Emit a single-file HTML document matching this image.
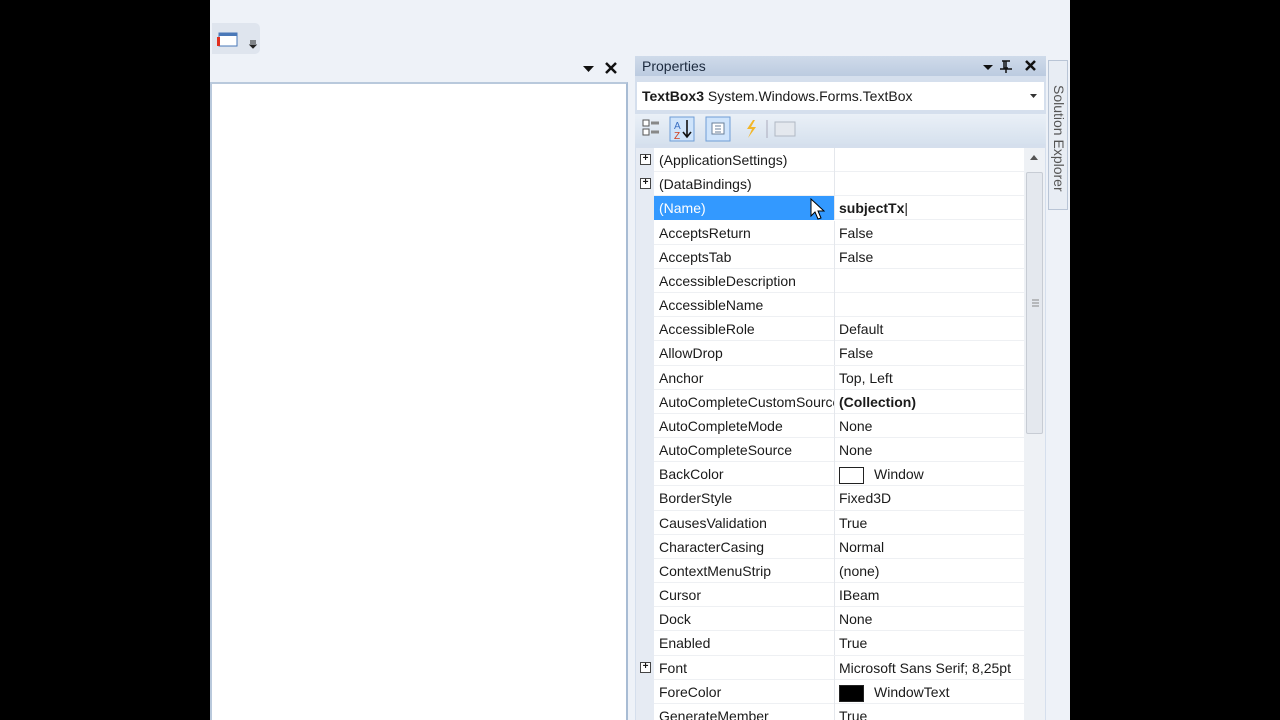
<!DOCTYPE html>
<html><head><meta charset="utf-8"><style>
*{margin:0;padding:0;box-sizing:border-box}
html{width:1280px;height:720px;overflow:hidden}
body{width:1280px;height:720px;background:#000;position:relative;overflow:hidden;font-family:"Liberation Sans",sans-serif;font-size:14px;color:#1a1a1a}
#main{position:absolute;left:210px;top:0;width:860px;height:720px;background:#eef2f8}
#doc{position:absolute;left:210px;top:82px;width:418px;height:660px;background:#fff;border:2px solid #b9c9dc;border-right-color:#a8bcd4}
#tbicon{position:absolute;left:212px;top:23px;width:48px;height:31px;background:#dfe5ee;border-radius:0 5px 5px 0}
#props{position:absolute;left:635px;top:56px;width:411px;height:664px;background:#d5dfed;overflow:hidden}
#title{position:absolute;left:0;top:0;width:411px;height:20px;background:linear-gradient(#cfdbea,#bccbe0);padding-left:7px;line-height:20px;color:#1c2a3e}
#combo{position:absolute;left:2px;top:26px;width:407px;height:28px;background:#fff;line-height:28px;padding-left:5px;font-size:14px}
#toolbar{position:absolute;left:0;top:58px;width:411px;height:30px;background:linear-gradient(#eaf0f7,#d6e1ee)}
#grid{position:absolute;left:1px;top:92px;width:409px;height:600px;background:#fff}
.row{position:absolute;left:0;width:388px;height:24.17px;line-height:24px;border-bottom:1px solid #eef0f3}
.gut{position:absolute;left:0;top:0;width:18px;height:25px;background:#e6ebf3}
.n{position:absolute;left:23px;top:0;width:175px;white-space:nowrap;overflow:hidden}
.v{position:absolute;left:198px;top:0;padding-left:4px;border-left:1px solid #e4e7ec;height:24px;white-space:nowrap;width:190px}
.pl{position:absolute;left:4px;top:6px;width:11px;height:11px;border:1px solid #444;background:#fff;font-size:10px;line-height:8px;text-align:center;font-weight:bold}
.sel .n{background:#3399ff;color:#fff;left:18px;padding-left:5px;width:180px}
#sb{position:absolute;left:388px;top:0;width:21px;height:600px;background:#eef1f5}
#thumb{position:absolute;left:2px;top:24px;width:17px;height:262px;background:#e4e8ee;border:1px solid #c7ccd4;border-radius:2px}
#side{position:absolute;left:1048px;top:60px;width:20px;height:150px;background:#e8edf4;border:1px solid #b9c5d6}
#side span{position:absolute;left:2px;top:24px;writing-mode:vertical-rl;font-size:14px;color:#555}
</style></head><body>
<div id="main"></div>
<div id="tbicon"><svg width="48" height="31"><rect x="7" y="10" width="18" height="13" fill="#fff" stroke="#4a78b8"/><rect x="7" y="10" width="18" height="3" fill="#4a78b8"/><rect x="5" y="14" width="3" height="9" fill="#e03020"/><path d="M38 18h6M38 20h6M38 22l3 3 3-3z" stroke="#222" fill="#222"/></svg></div>
<svg style="position:absolute;left:580px;top:60px" width="40" height="18"><path d="M3 6h11l-5.5 6z" fill="#111"/><path d="M26 3l10 10M36 3l-10 10" stroke="#111" stroke-width="2.5"/></svg>
<div id="doc"></div>
<div id="props">
<div id="title">Properties<svg style="position:absolute;left:345px;top:3px" width="64" height="15"><path d="M3 6h10l-5 5z" fill="#111"/><path d="M26 2v8M22 2h8M24 2v7h4M26 10v4M20 10h12" stroke="#111" stroke-width="1.5" fill="none"/><path d="M46 2l9 9M55 2l-9 9" stroke="#111" stroke-width="2.5"/></svg></div>
<div id="combo"><b>TextBox3</b> System.Windows.Forms.TextBox<svg style="position:absolute;left:392px;top:11px" width="10" height="8"><path d="M1 1h7l-3.5 4z" fill="#333"/></svg></div>
<div id="toolbar"><svg width="200" height="30">
<rect x="8" y="6" width="6" height="6" fill="#fff" stroke="#555"/><rect x="8" y="15" width="6" height="6" fill="#fff" stroke="#555"/><path d="M16 9h8M16 18h8" stroke="#888" stroke-width="3"/>
<rect x="35" y="3" width="24" height="24" fill="#cfe4fb" stroke="#6f9dd6"/><text x="39" y="15" font-size="10" fill="#3a6fc2">A</text><text x="39" y="25" font-size="10" fill="#d04020">Z</text><path d="M52 6v16M48 18l4 5 4-5" stroke="#111" stroke-width="1.6" fill="none"/>
<rect x="71" y="3" width="24" height="24" fill="#cfe4fb" stroke="#6f9dd6"/><rect x="77" y="9" width="12" height="11" fill="#fff" stroke="#6a7f99"/><path d="M80 12h6M80 15h6M80 18h6" stroke="#6a7f99"/>
<path d="M118 6l-6 9h5l-4 9 8-11h-5l4-7z" fill="#f2b62a"/>
<path d="M132 6v18" stroke="#aab"/><rect x="140" y="8" width="20" height="14" fill="#e4e8ee" stroke="#b0b8c4"/>
</svg></div>
<div id="grid">
<div class="row" style="top:0"><div class="gut"><div class="pl">+</div></div><div class="n">(ApplicationSettings)</div><div class="v"></div></div>
<div class="row" style="top:24.17px"><div class="gut"><div class="pl">+</div></div><div class="n">(DataBindings)</div><div class="v"></div></div>
<div class="row sel" style="top:48.34px"><div class="gut"></div><div class="n">(Name)</div><div class="v"><b>subjectTx</b>|</div><svg style="position:absolute;left:173px;top:2px" width="16" height="22"><path d="M2 1v17l4-4 3 7 3-1-3-7h6z" fill="#fff" stroke="#000"/></svg></div>
<div class="row" style="top:72.51px"><div class="gut"></div><div class="n">AcceptsReturn</div><div class="v">False</div></div>
<div class="row" style="top:96.68px"><div class="gut"></div><div class="n">AcceptsTab</div><div class="v">False</div></div>
<div class="row" style="top:120.85px"><div class="gut"></div><div class="n">AccessibleDescription</div><div class="v"></div></div>
<div class="row" style="top:145.02px"><div class="gut"></div><div class="n">AccessibleName</div><div class="v"></div></div>
<div class="row" style="top:169.19px"><div class="gut"></div><div class="n">AccessibleRole</div><div class="v">Default</div></div>
<div class="row" style="top:193.36px"><div class="gut"></div><div class="n">AllowDrop</div><div class="v">False</div></div>
<div class="row" style="top:217.53px"><div class="gut"></div><div class="n">Anchor</div><div class="v">Top, Left</div></div>
<div class="row" style="top:241.7px"><div class="gut"></div><div class="n">AutoCompleteCustomSource</div><div class="v"><b>(Collection)</b></div></div>
<div class="row" style="top:265.87px"><div class="gut"></div><div class="n">AutoCompleteMode</div><div class="v">None</div></div>
<div class="row" style="top:290.04px"><div class="gut"></div><div class="n">AutoCompleteSource</div><div class="v">None</div></div>
<div class="row" style="top:314.21px"><div class="gut"></div><div class="n">BackColor</div><div class="v"><span style="display:inline-block;width:25px;height:17px;border:1px solid #222;background:#fff;vertical-align:middle;margin-right:10px"></span>Window</div></div>
<div class="row" style="top:338.38px"><div class="gut"></div><div class="n">BorderStyle</div><div class="v">Fixed3D</div></div>
<div class="row" style="top:362.55px"><div class="gut"></div><div class="n">CausesValidation</div><div class="v">True</div></div>
<div class="row" style="top:386.72px"><div class="gut"></div><div class="n">CharacterCasing</div><div class="v">Normal</div></div>
<div class="row" style="top:410.89px"><div class="gut"></div><div class="n">ContextMenuStrip</div><div class="v">(none)</div></div>
<div class="row" style="top:435.06px"><div class="gut"></div><div class="n">Cursor</div><div class="v">IBeam</div></div>
<div class="row" style="top:459.23px"><div class="gut"></div><div class="n">Dock</div><div class="v">None</div></div>
<div class="row" style="top:483.4px"><div class="gut"></div><div class="n">Enabled</div><div class="v">True</div></div>
<div class="row" style="top:507.57px"><div class="gut"><div class="pl">+</div></div><div class="n">Font</div><div class="v">Microsoft Sans Serif; 8,25pt</div></div>
<div class="row" style="top:531.74px"><div class="gut"></div><div class="n">ForeColor</div><div class="v"><span style="display:inline-block;width:25px;height:17px;border:1px solid #222;background:#000;vertical-align:middle;margin-right:10px"></span>WindowText</div></div>
<div class="row" style="top:555.91px"><div class="gut"></div><div class="n">GenerateMember</div><div class="v">True</div></div>
<div id="sb"><svg width="21" height="20"><path d="M6 12h8l-4-5z" fill="#555"/></svg><div id="thumb"><svg style="position:absolute;left:5px;top:126px" width="8" height="8"><path d="M0 1h7M0 4h7M0 7h7" stroke="#888"/></svg></div></div>
</div>
</div>
<div id="side"><span>Solution Explorer</span></div>
</body></html>
